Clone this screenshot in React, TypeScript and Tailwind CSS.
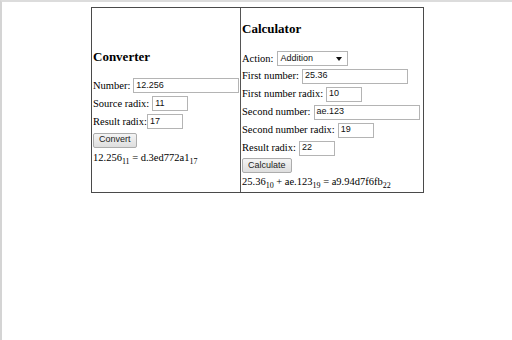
const serif = { fontFamily: '"Liberation Serif", "Times New Roman", serif' }

function Field({ label, value, width, gap = true }: { label: string; value: string; width: string; gap?: boolean }) {
  return (
    <div className="flex h-[18px] items-center whitespace-nowrap">
      <span className={gap ? 'mr-[3px]' : ''}>{label}</span>
      <div
        className={`${width} flex h-[15px] items-center border border-[#b4b4b4] bg-white pl-[2px] text-[9px] text-[#111] font-['Liberation_Sans',Arial,sans-serif]`}
      >
        {value}
      </div>
    </div>
  )
}

function Btn({ children }: { children: string }) {
  return (
    <div className="flex h-[15px] items-center rounded-[2px] border border-[#acacac] bg-gradient-to-b from-[#f4f4f4] to-[#dedede] px-[5px] text-[9px] text-[#222] font-['Liberation_Sans',Arial,sans-serif]">
      {children}
    </div>
  )
}

function Sub({ children }: { children: string }) {
  return <span className="relative top-[3px] text-[8px]">{children}</span>
}

export default function App() {
  return (
    <div className="h-screen border-t-2 border-l-2 border-t-[#dcdcdc] border-l-[#d4d4d4] bg-white text-black" style={serif}>
      <div className="ml-[89px] mt-[5px] flex w-[333px] border border-[#4a4a4a] text-[10.5px]">
        {/* converter */}
        <div className="flex w-[149px] flex-col justify-center border-r border-[#555] pl-[1px]">
          <h3 className="pt-[13px] pb-[13px] text-[13px] font-bold leading-[15px]">Converter</h3>
          <Field label="Number:" value="12.256" width="w-[106px]" />
          <Field label="Source radix:" value="11" width="w-[36px]" />
          <Field label="Result radix:" value="17" width="w-[36px]" gap={false} />
          <div className="flex h-[19px] items-center">
            <Btn>Convert</Btn>
          </div>
          <div className="h-[15px] leading-[15px] whitespace-nowrap">
            12.256<Sub>11</Sub> = d.3ed772a1<Sub>17</Sub>
          </div>
        </div>

        {/* calculator */}
        <div className="flex w-[181px] flex-col pl-[1px] pb-[3px]">
          <h3 className="pt-[13px] pb-[14px] text-[13px] font-bold leading-[15px]">Calculator</h3>
          <div className="flex h-[17px] items-center whitespace-nowrap">
            <span className="mr-[3px]">Action:</span>
            <div className="flex h-[15px] w-[71px] items-center justify-between border border-[#b4b4b4] bg-white pl-[3px] pr-[5px] text-[9px] text-[#111] font-['Liberation_Sans',Arial,sans-serif]">
              <span>Addition</span>
              <svg width="6" height="4" viewBox="0 0 6 4">
                <path d="M0 0h6L3 4z" fill="#111" />
              </svg>
            </div>
          </div>
          <Field label="First number:" value="25.36" width="w-[106px]" />
          <Field label="First number radix:" value="10" width="w-[36px]" />
          <Field label="Second number:" value="ae.123" width="w-[106px]" />
          <Field label="Second number radix:" value="19" width="w-[36px]" />
          <Field label="Result radix:" value="22" width="w-[36px]" />
          <div className="flex h-[17px] items-center">
            <Btn>Calculate</Btn>
          </div>
          <div className="h-[15px] leading-[15px] whitespace-nowrap">
            25.36<Sub>10</Sub> + ae.123<Sub>19</Sub> = a9.94d7f6fb<Sub>22</Sub>
          </div>
        </div>
      </div>
    </div>
  )
}
